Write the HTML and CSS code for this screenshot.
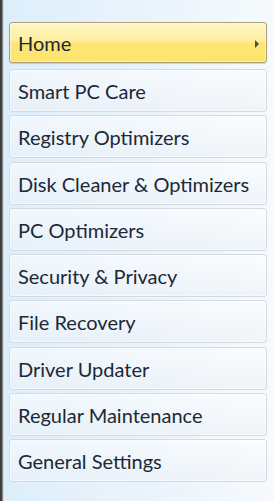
FILE: index.html
```html
<!DOCTYPE html>
<html>
<head>
<meta charset="utf-8">
<link rel="stylesheet" href="styles.css">
</head>
<body>
<div class="frame">
  <div class="edge"></div>
  <nav class="panel">
    <div class="item active"><span>Home</span><span class="arrow"></span></div>
    <div class="item"><span>Smart PC Care</span></div>
    <div class="item"><span>Registry Optimizers</span></div>
    <div class="item"><span>Disk Cleaner &amp; Optimizers</span></div>
    <div class="item"><span>PC Optimizers</span></div>
    <div class="item"><span>Security &amp; Privacy</span></div>
    <div class="item"><span>File Recovery</span></div>
    <div class="item"><span>Driver Updater</span></div>
    <div class="item"><span>Regular Maintenance</span></div>
    <div class="item"><span>General Settings</span></div>
  </nav>
</div>
</body>
</html>
```
FILE: styles.css
```css
html, body {
  margin: 0;
  padding: 0;
  width: 274px;
  height: 501px;
  overflow: hidden;
}
.frame {
  display: flex;
  height: 501px;
}
.edge {
  width: 4px;
  flex: none;
  background: linear-gradient(to right, #3f3f3f 0, #3f3f3f 2px, #8a8a8a 2px, #8a8a8a 3px, #cfd6dc 3px);
}
.panel {
  flex: 1;
  display: flex;
  flex-direction: column;
  padding: 22px 7px 0 5px;
  background: linear-gradient(to right, #ddeefb 0%, #e9f3fc 50%, #f6fafd 100%);
  font-family: "Lato", "Open Sans", sans-serif;
  font-size: 20px;
  color: #1c2836;
}
.item {
  box-sizing: border-box;
  height: 43px;
  margin-bottom: 3.25px;
  display: flex;
  align-items: center;
  justify-content: space-between;
  padding: 0 8px 0 8px;
  border: 1px solid #d3dae1;
  border-radius: 3px;
  background: linear-gradient(to bottom, rgba(255,255,255,0.55), rgba(236,241,246,0.6));
  box-shadow: inset 0 0 0 1px rgba(255,255,255,0.5);
}
.item span:first-child {
  margin-top: 1px;
}
.item.active {
  height: 41px;
  margin-bottom: 6px;
  border-color: #a9a07a;
  background: linear-gradient(to bottom, #fef6c6 0%, #fdeea0 45%, #fde676 52%, #fde46c 100%);
  box-shadow: 0 1px 1px rgba(0,0,0,0.15), inset 0 0 0 1px rgba(255,255,255,0.45);
}
.arrow {
  width: 0;
  height: 0;
  border-top: 4px solid transparent;
  border-bottom: 4px solid transparent;
  border-left: 4px solid #4a4a4a;
  margin-right: -1px;
  margin-top: 2px;
}
```
